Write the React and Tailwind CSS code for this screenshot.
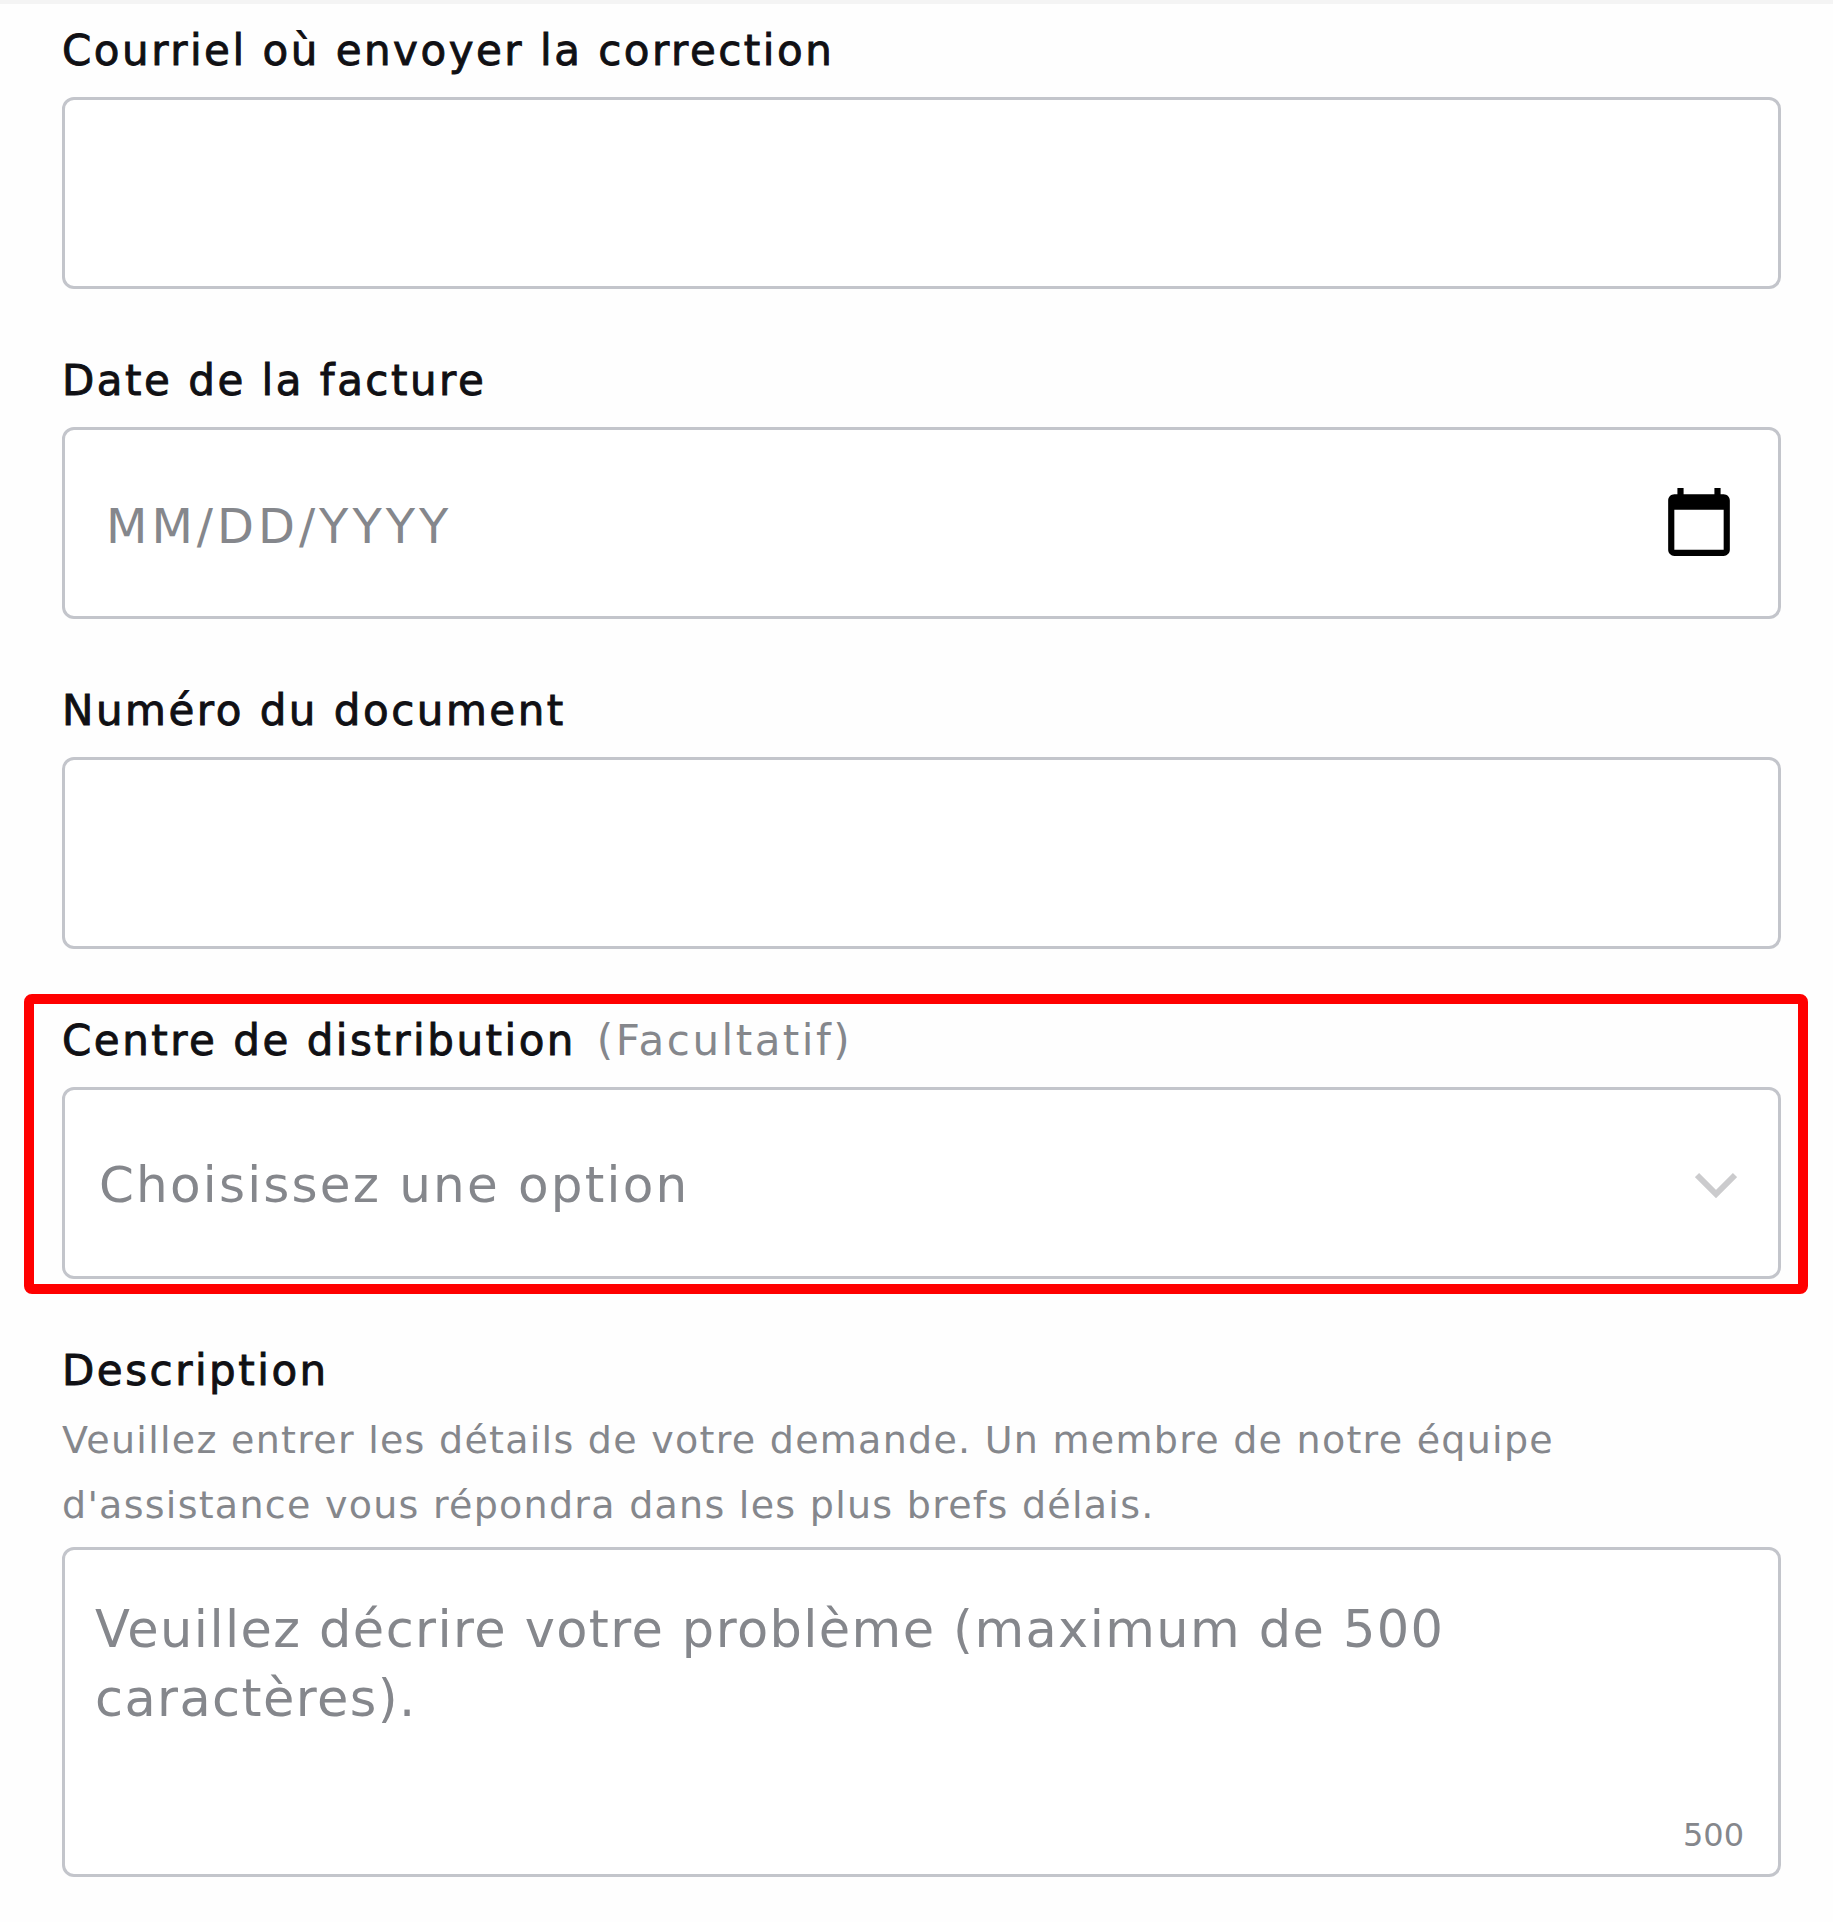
import React from "react";

const font = { fontFamily: '"DejaVu Sans", "Noto Sans", sans-serif' };

function Label({ children, extra }) {
  return (
    <div className="h-[40px] text-[42px] leading-[44px] tracking-[2.5px] text-[#101014] [-webkit-text-stroke:0.9px_#101014] whitespace-nowrap">
      {children}
      {extra ? <span className="ml-[5px] text-[#85878c] [-webkit-text-stroke:0px]"> {extra}</span> : null}
    </div>
  );
}

function Box({ children }) {
  return (
    <div className="relative h-[192px] mt-[28px] border-[3px] border-[#c3c5cb] rounded-[12px] bg-white flex items-center">
      {children}
    </div>
  );
}

function Calendar() {
  return (
    <svg viewBox="0 0 24 24" className="w-[74px] h-[74px] absolute right-[42px] top-[55px]" fill="#000">
      <path d="M20 3h-1V1h-2v2H7V1H5v2H4c-1.1 0-2 .9-2 2v16c0 1.1.9 2 2 2h16c1.1 0 2-.9 2-2V5c0-1.1-.9-2-2-2zm0 18H4V8h16v13z" />
    </svg>
  );
}

function Chevron() {
  return (
    <svg viewBox="0 0 42 26" className="w-[42px] h-[26px] absolute right-[41px] top-[82px]" fill="none" stroke="#cbcbcd" strokeWidth="6">
      <path d="M2 3l19 19L40 3" />
    </svg>
  );
}

export default function App() {
  return (
    <div className="relative w-[1833px] h-[1922px] bg-[#fefefe] overflow-hidden" style={font}>
      <div className="h-[4px] bg-[#f4f4f4]" />
      <div className="pt-[25px] pl-[62px] pr-[52px] flex flex-col gap-[70px]">
        <div>
          <Label>Courriel où envoyer la correction</Label>
          <Box />
        </div>
        <div>
          <Label>Date de la facture</Label>
          <Box>
            <span className="pl-[41px] pt-[5px] text-[48px] tracking-[4px] text-[#85878c]">MM/DD/YYYY</span>
            <Calendar />
          </Box>
        </div>
        <div>
          <Label>Numéro du document</Label>
          <Box />
        </div>
        <div className="relative">
          <div className="absolute left-[-38px] right-[-27px] top-[-25px] bottom-[-15px] border-[10px] border-[#ff0000] rounded-[8px] pointer-events-none" />
          <Label extra="(Facultatif)">Centre de distribution</Label>
          <Box>
            <span className="pl-[34px] pt-[4px] text-[50px] tracking-[2.2px] text-[#85878c]">Choisissez une option</span>
            <Chevron />
          </Box>
        </div>
        <div>
          <Label>Description</Label>
          <p className="mt-[19px] text-[38px] leading-[65px] tracking-[1.27px] text-[#85878c] whitespace-nowrap">
            Veuillez entrer les détails de votre demande. Un membre de notre équipe
            <br />
            d'assistance vous répondra dans les plus brefs délais.
          </p>
          <div className="relative h-[330px] mt-[9px] border-[3px] border-[#c3c5cb] rounded-[12px] bg-white pt-[45px] pl-[30px]">
            <div className="text-[51px] leading-[69px] tracking-[1.4px] text-[#85878c] whitespace-nowrap">
              Veuillez décrire votre problème (maximum de 500
              <br />
              caractères).
            </div>
            <span className="absolute right-[34px] bottom-[22px] text-[32px] leading-[34px] text-[#85878c]">500</span>
          </div>
        </div>
      </div>
    </div>
  );
}
